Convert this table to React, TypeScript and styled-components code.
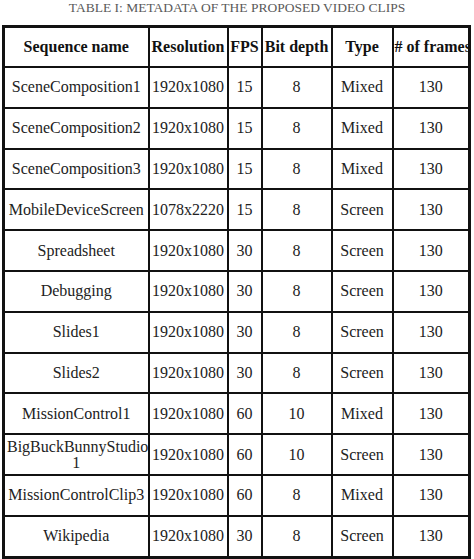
import styled, { createGlobalStyle } from 'styled-components';

type Clip = {
  name: string;
  resolution: string;
  fps: number;
  depth: number;
  type: string;
  frames: number;
};

const serif = '"Liberation Serif", "Times New Roman", serif';

const GlobalStyle = createGlobalStyle`
  html, body {
    margin: 0;
    padding: 0;
    background: #fff;
  }
  body {
    font-family: ${serif};
    color: #1a1a1a;
  }
`;

const Page = styled.div`
  width: 474px;
  height: 559px;
  overflow: hidden;
  background: #fff;
  font-family: ${serif};
`;

const Title = styled.div`
  height: 25px;
  text-align: center;
  font-family: ${serif};
  font-size: 13.5px;
  line-height: 15px;
  color: #5a5a5a;
  text-transform: uppercase;
`;

const Table = styled.table`
  margin-left: 2px;
  width: 469px;
  table-layout: fixed;
  border-collapse: collapse;
  border: 3px solid #111;
  font-family: ${serif};
`;

const Head = styled.th`
  height: 38px;
  padding: 0 1px;
  border: 2px solid #111;
  font-family: ${serif};
  font-size: 16px;
  font-weight: bold;
  text-align: center;
  white-space: nowrap;
  color: #111;
`;

const Cell = styled.td`
  height: 38.8px;
  padding: 0 2px;
  border: 2px solid #111;
  font-family: ${serif};
  font-size: 16px;
  line-height: 16px;
  text-align: center;
  white-space: pre-line;
  color: #222;
`;

const clips: Clip[] = [
  { name: 'SceneComposition1', resolution: '1920x1080', fps: 15, depth: 8, type: 'Mixed', frames: 130 },
  { name: 'SceneComposition2', resolution: '1920x1080', fps: 15, depth: 8, type: 'Mixed', frames: 130 },
  { name: 'SceneComposition3', resolution: '1920x1080', fps: 15, depth: 8, type: 'Mixed', frames: 130 },
  { name: 'MobileDeviceScreen', resolution: '1078x2220', fps: 15, depth: 8, type: 'Screen', frames: 130 },
  { name: 'Spreadsheet', resolution: '1920x1080', fps: 30, depth: 8, type: 'Screen', frames: 130 },
  { name: 'Debugging', resolution: '1920x1080', fps: 30, depth: 8, type: 'Screen', frames: 130 },
  { name: 'Slides1', resolution: '1920x1080', fps: 30, depth: 8, type: 'Screen', frames: 130 },
  { name: 'Slides2', resolution: '1920x1080', fps: 30, depth: 8, type: 'Screen', frames: 130 },
  { name: 'MissionControl1', resolution: '1920x1080', fps: 60, depth: 10, type: 'Mixed', frames: 130 },
  { name: 'BigBuckBunnyStudio\n1', resolution: '1920x1080', fps: 60, depth: 10, type: 'Screen', frames: 130 },
  { name: 'MissionControlClip3', resolution: '1920x1080', fps: 60, depth: 8, type: 'Mixed', frames: 130 },
  { name: 'Wikipedia', resolution: '1920x1080', fps: 30, depth: 8, type: 'Screen', frames: 130 },
];

const widths = [145, 79, 34, 70, 61, 77];

const App = () => {
  return (
    <Page>
      <GlobalStyle />
      <Title>Table I: Metadata of the proposed video clips</Title>
      <Table>
        <colgroup>
          {widths.map((w, i) => (
            <col key={i} style={{ width: w }} />
          ))}
        </colgroup>
        <thead>
          <tr>
            <Head>Sequence name</Head>
            <Head>Resolution</Head>
            <Head>FPS</Head>
            <Head>Bit depth</Head>
            <Head>Type</Head>
            <Head># of frames</Head>
          </tr>
        </thead>
        <tbody>
          {clips.map((c) => (
            <tr key={c.name}>
              <Cell>{c.name}</Cell>
              <Cell>{c.resolution}</Cell>
              <Cell>{c.fps}</Cell>
              <Cell>{c.depth}</Cell>
              <Cell>{c.type}</Cell>
              <Cell>{c.frames}</Cell>
            </tr>
          ))}
        </tbody>
      </Table>
    </Page>
  );
};

export default App;
